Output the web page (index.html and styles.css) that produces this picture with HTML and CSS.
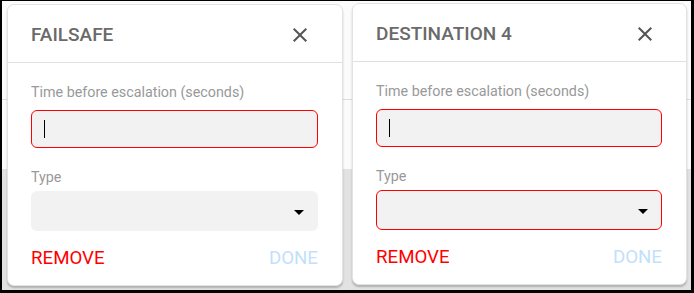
FILE: index.html
```html
<!DOCTYPE html>
<html>
<head>
<meta charset="utf-8">
<link rel="stylesheet" href="styles.css">
</head>
<body>
<div class="frame">
  <div class="card card-a">
    <div class="card-header">
      <span class="title">FAILSAFE</span>
      <svg class="close" viewBox="0 0 24 24" width="24" height="24"><path d="M19 6.41L17.59 5 12 10.59 6.41 5 5 6.41 10.59 12 5 17.59 6.41 19 12 13.41 17.59 19 19 17.59 13.41 12z"/></svg>
    </div>
    <div class="card-body">
      <div class="label label-time">Time before escalation (seconds)</div>
      <div class="field input"><span class="cursor"></span></div>
      <div class="label label-type">Type</div>
      <div class="field select"><span class="caret"></span></div>
      <div class="actions">
        <span class="btn remove">REMOVE</span>
        <span class="btn done">DONE</span>
      </div>
    </div>
  </div>
  <div class="card card-b">
    <div class="card-header">
      <span class="title">DESTINATION 4</span>
      <svg class="close" viewBox="0 0 24 24" width="24" height="24"><path d="M19 6.41L17.59 5 12 10.59 6.41 5 5 6.41 10.59 12 5 17.59 6.41 19 12 13.41 17.59 19 19 17.59 13.41 12z"/></svg>
    </div>
    <div class="card-body">
      <div class="label label-time">Time before escalation (seconds)</div>
      <div class="field input"><span class="cursor"></span></div>
      <div class="label label-type">Type</div>
      <div class="field select invalid"><span class="caret"></span></div>
      <div class="actions">
        <span class="btn remove">REMOVE</span>
        <span class="btn done">DONE</span>
      </div>
    </div>
  </div>
</div>
</body>
</html>
```
FILE: styles.css
```css
html, body {
  margin: 0;
  padding: 0;
  background: #000;
}
body {
  width: 694px;
  height: 293px;
  overflow: hidden;
  font-family: Roboto, "Liberation Sans", sans-serif;
}
.frame {
  box-sizing: border-box;
  width: 694px;
  height: 293px;
  border-style: solid;
  border-color: #000;
  border-width: 1px 3px 3px 2px;
  background: linear-gradient(#fbfbfb 0, #fbfbfb 98px, #dcdcdc 98px, #dcdcdc 99px, #fbfbfb 99px, #fbfbfb 168px, #e2e2e2 168px);
  display: flex;
  align-items: flex-start;
  gap: 9px;
  padding-left: 5px;
}
.card {
  box-sizing: border-box;
  width: 336px;
  height: 282px;
  background: #fff;
  border: 1px solid #e3e3e3;
  border-radius: 7px;
  box-shadow: 0 2px 2px rgba(0, 0, 0, 0.22);
  display: flex;
  flex-direction: column;
}
.card-a { margin-top: 3px; }
.card-b { margin-top: 2px; width: 335px; }
.card-header {
  height: 57px;
  border-bottom: 1px solid #e0e0e0;
  display: flex;
  align-items: center;
  justify-content: space-between;
  padding: 0 30px 0 23px;
}
.card-b .card-header { padding-right: 29px; }
.title {
  font-size: 19px;
  font-weight: 500;
  color: #6a6a6a;
  margin-top: 1px;
}
.close {
  fill: #555;
  margin-top: 2px;
}
.card-body {
  padding: 20px 24px 0 23px;
  display: flex;
  flex-direction: column;
}
.label {
  font-size: 14.3px;
  line-height: 18px;
  color: #999;
}
.label-time { margin-bottom: 9px; }
.label-type { margin-top: 20px; margin-bottom: 5px; }
.field {
  box-sizing: border-box;
  background: #f2f2f2;
  border-radius: 6px;
  border: 1px solid transparent;
  display: flex;
  align-items: center;
}
.input {
  height: 38px;
  border-color: #ff0000;
}
.select {
  height: 40px;
  justify-content: flex-end;
  padding-right: 13px;
}
.select.invalid { border-color: #ff0000; }
.cursor {
  width: 1px;
  height: 18px;
  background: #000;
  margin-left: 12px;
}
.caret {
  width: 0;
  height: 0;
  border-left: 5px solid transparent;
  border-right: 5px solid transparent;
  border-top: 5px solid #000;
  margin-top: 3px;
}
.actions {
  margin-top: 16px;
  display: flex;
  justify-content: space-between;
}
.btn {
  font-size: 18.7px;
  line-height: 22px;
}
.remove { color: #ff0000; }
.done { color: #c3dffc; }
```
